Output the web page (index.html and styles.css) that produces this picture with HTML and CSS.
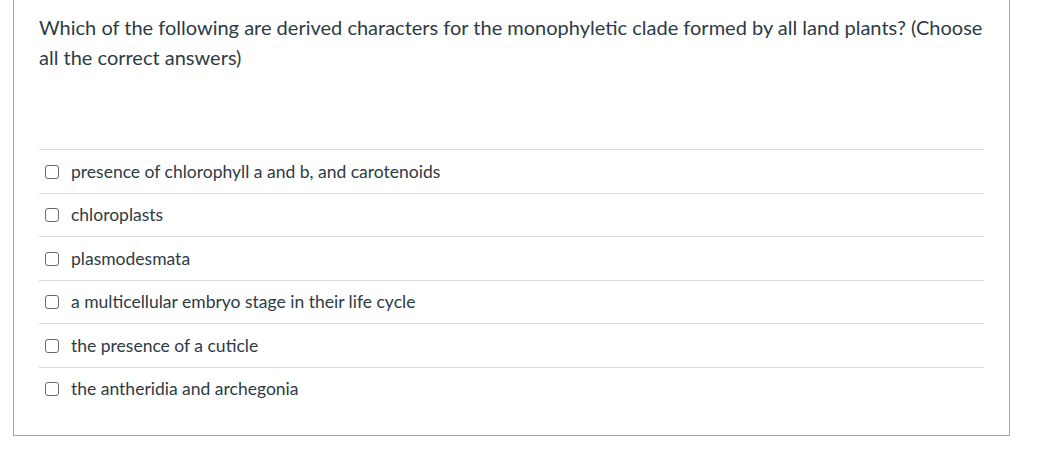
FILE: index.html
```html
<!DOCTYPE html>
<html>
<head>
<meta charset="utf-8">
<link rel="stylesheet" href="styles.css">
</head>
<body>
<div class="question">
  <div class="question-text">Which of the following are derived characters for the monophyletic clade formed by all land plants? (Choose all the correct answers)</div>
  <div class="answers">
    <label class="answer"><span class="box"></span><span class="label">presence of chlorophyll a and b, and carotenoids</span></label>
    <label class="answer"><span class="box"></span><span class="label">chloroplasts</span></label>
    <label class="answer"><span class="box"></span><span class="label">plasmodesmata</span></label>
    <label class="answer"><span class="box"></span><span class="label">a multicellular embryo stage in their life cycle</span></label>
    <label class="answer"><span class="box"></span><span class="label">the presence of a cuticle</span></label>
    <label class="answer"><span class="box"></span><span class="label">the antheridia and archegonia</span></label>
  </div>
</div>
</body>
</html>
```
FILE: styles.css
```css
html, body {
  margin: 0;
  padding: 0;
  background: #fff;
}
body {
  font-family: Lato, "Open Sans", sans-serif;
  color: #2d3b45;
}
.question {
  margin-left: 13px;
  width: 997px;
  height: 436px;
  box-sizing: border-box;
  border: 1px solid #a6a6a6;
  border-top: none;
}
.question-text {
  padding: 12px 25px 0 25px;
  font-size: 20px;
  line-height: 30px;
  height: 149px;
  box-sizing: border-box;
}
.answers {
  margin: 0 25px;
}
.answer {
  display: flex;
  align-items: center;
  height: 43.5px;
  box-sizing: border-box;
  border-top: 1px solid #dcdcdc;
  padding-left: 6px;
  font-size: 17.5px;
}
.box {
  width: 12px;
  height: 12px;
  border: 1px solid #6a6a6a;
  border-radius: 3px;
  margin-right: 12px;
  margin-top: 1px;
  flex: none;
}
```
